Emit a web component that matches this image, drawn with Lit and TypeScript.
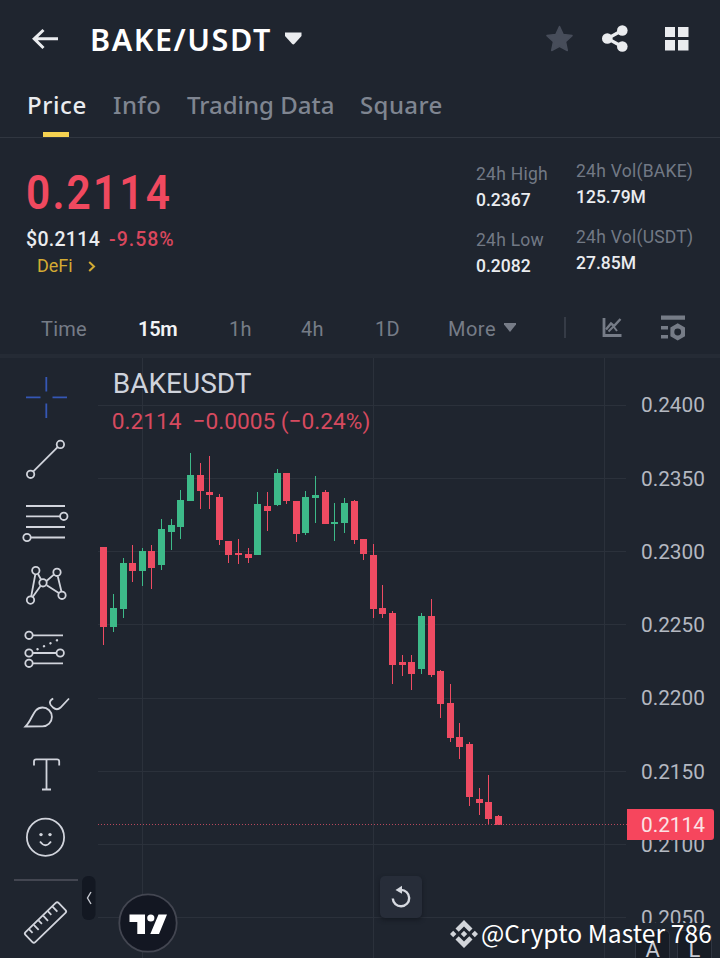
import { LitElement, html, svg, css } from "lit";
import { customElement } from "lit/decorators.js";

type Candle = [kind: "up" | "down", x: number, high: number, top: number, bottom: number, low: number];

const CANDLES: Candle[] = [
  ["down", 103.5, 547, 547, 627, 645],
  ["up", 113.5, 594, 608, 627, 632],
  ["up", 123.5, 558, 563, 609, 618],
  ["down", 132.5, 545, 563, 571, 582],
  ["up", 142.5, 548, 551, 571, 586],
  ["down", 151.5, 545, 551, 568, 589],
  ["up", 161.5, 519, 529, 565, 570],
  ["up", 171.5, 519, 525, 532, 550],
  ["up", 180.5, 490, 500, 527, 539],
  ["up", 190.5, 453, 475, 501, 501],
  ["down", 200.5, 463, 475, 491, 509],
  ["down", 209.5, 456, 492, 495, 509],
  ["down", 219.5, 494, 497, 540, 545],
  ["down", 228.5, 541, 541, 555, 563],
  ["down", 238.5, 539, 553, 555, 564],
  ["down", 248.5, 548, 554, 558, 563],
  ["up", 257.5, 492, 504, 555, 555],
  ["down", 267.5, 492, 506, 511, 531],
  ["up", 277.5, 469, 473, 505, 506],
  ["down", 286.5, 473, 473, 501, 504],
  ["down", 296.5, 501, 501, 534, 542],
  ["up", 305.5, 491, 497, 533, 535],
  ["up", 315.5, 476, 495, 498, 523],
  ["down", 325.5, 490, 492, 524, 524],
  ["up", 334.5, 503, 522, 524, 541],
  ["up", 344.5, 498, 503, 523, 533],
  ["down", 354.5, 500, 501, 540, 544],
  ["down", 363.5, 539, 539, 554, 560],
  ["down", 373.5, 544, 555, 609, 618],
  ["down", 382.5, 585, 608, 614, 618],
  ["down", 392.5, 611, 613, 665, 684],
  ["down", 402.5, 655, 662, 665, 676],
  ["down", 411.5, 655, 662, 674, 690],
  ["up", 421.5, 613, 616, 669, 674],
  ["down", 431.5, 599, 616, 675, 677],
  ["down", 440.5, 670, 671, 704, 718],
  ["down", 450.5, 684, 703, 738, 742],
  ["down", 459.5, 723, 737, 747, 759],
  ["down", 469.5, 742, 744, 797, 806],
  ["down", 479.5, 788, 799, 803, 815],
  ["down", 488.5, 775, 802, 819, 824],
  ["down", 498.5, 815, 816, 825, 825],
];

const LEVELS: [number, string][] = [
  [405, "0.2400"], [478.5, "0.2350"], [551.5, "0.2300"], [624.5, "0.2250"],
  [698, "0.2200"], [771.5, "0.2150"], [844.5, "0.2100"], [917.5, "0.2050"],
];

const ring = (x: number, y: number) => svg`<circle cx=${x} cy=${y} r="3.7" />`;

const TOOLS = [
  svg`<path class="blue" d="M46.3 377V391.5M46.3 403.5V418M26 397.3H40.5M52.5 397.3H67" />`,
  svg`<path d="M33.4 471.3L57.6 447.2" />${ring(30.6, 474.3)}${ring(60.4, 444.4)}`,
  svg`<path d="M26 506H65M26 516.3H60M26 527H65M31 537.5H65" />${ring(63.8, 516.3)}${ring(27, 537.5)}`,
  svg`<path d="M31.2 596.3L35.3 574.5M38 574L41 579.5M32.8 596.7L40.5 586M46.5 581L53.8 574.6M46.7 585.2L58.8 593M57.8 576.5L61.4 591.3" />
    ${ring(35.8, 570.6)}${ring(57, 572.3)}${ring(43, 582.8)}${ring(30.5, 600.1)}${ring(62, 595.3)}`,
  svg`<path d="M33 635.3H63M33 653H56.3M33 663.3H63" /><path class="dots" d="M37.5 649.2L60.5 638.7" />
    ${ring(29, 635.3)}${ring(29, 653)}${ring(60.2, 653)}${ring(29, 663.3)}`,
  svg`<path d="M25.5 726.5C33 719 33 707.5 42.5 707.5A9.4 9.4 0 0 1 42.5 726.3Z" />
    <path d="M53.2 698.5C48.5 701 49 704.5 53 707.5C56 710 58 710 60.5 707.5L69 698.5" />`,
  svg`<path d="M34 765.5V761.5Q34 759.3 36.2 759.3H57Q59.2 759.3 59.2 761.5V765.5M46.5 759.3V789.5M42 789.5H51" />`,
  svg`<circle cx="45.5" cy="837.3" r="18.6" /><path d="M40 841.5Q45.5 849 51 841.5" />
    <circle class="solid" cx="41" cy="834.6" r="1.7" /><circle class="solid" cx="50" cy="834.6" r="1.7" />`,
];

@customElement("app-root")
export class AppRoot extends LitElement {
  static styles = css`
    :host { display: block; position: relative; width: 720px; height: 958px; overflow: hidden; background: #1f252f; color: #eaecef; font-family: Roboto, "Liberation Sans", sans-serif; }
    * { box-sizing: border-box; }
    svg { display: block; flex: none; }
    span { white-space: nowrap; }
    .header { display: flex; align-items: center; height: 78px; padding-left: 31px; }
    .title { font: 600 30.5px/40px "Noto Sans", sans-serif; letter-spacing: 1.55px; color: #fff; margin-left: 31px; width: 195px; }
    .star { margin-left: 243px; }
    .share { margin-left: 28px; }
    .apps { margin-left: 36px; }
    .tabs { display: grid; grid-template-columns: 86px 74px 173px auto; height: 60px; padding: 9px 0 0 27px; border-bottom: 1px solid #303640; font: 500 24px/35px "Noto Sans", sans-serif; color: #7f8591; }
    .tab { display: flex; flex-direction: column; justify-content: space-between; align-items: center; justify-self: start; }
    .spaced { letter-spacing: 0.4px; }
    .active { color: #eaecef; letter-spacing: 0.6px; }
    .active::after { content: ""; width: 26px; height: 5px; margin-right: 2px; background: #f5d251; }
    .ticker { display: flex; height: 167px; padding-left: 26px; }
    .quote { width: 450px; padding-top: 29px; }
    .price { display: block; width: max-content; font-weight: 600; font-size: 49px; line-height: 52px; letter-spacing: 2.5px; color: #f0495f; transform: scaleX(0.865); transform-origin: left; }
    .row { display: flex; margin-top: 8px; font-size: 19.5px; line-height: 26px; font-weight: 500; letter-spacing: 0.3px; }
    .change { color: #d9475d; margin-left: 9px; letter-spacing: 1px; }
    .tag { display: flex; align-items: center; gap: 15px; padding-left: 11px; color: #d3ab33; font-size: 18px; line-height: 26px; }
    .col { width: 100px; padding-top: 23px; }
    .col.raised { padding-top: 20px; }
    .stat { display: flex; flex-direction: column; margin-bottom: 14px; font-size: 17.5px; line-height: 26px; letter-spacing: 0.25px; color: #727985; }
    .value { color: #eaecef; font-weight: 500; letter-spacing: 0; }
    .stat span { align-self: flex-start; }
    .intervals { display: grid; grid-template-columns: 97px 91px 72px 74px 73px 116px 38px 58px auto; align-items: center; height: 49px; padding: 0 0 4px 41px; font-size: 20px; line-height: 41px; color: #767c87; }
    .intervals span { justify-self: start; padding-top: 4px; letter-spacing: 0.2px; }
    .intervals .on { color: #f2f4f6; font-weight: 600; letter-spacing: -0.3px; }
    .intervals .more { display: flex; align-items: center; gap: 8px; }
    .more span { letter-spacing: 0.5px; }
    .rule { width: 2px; height: 21px; background: #353b46; }
    .divider { height: 4px; background: #252b35; }
    .chart { position: relative; display: flex; height: 600px; }
    .tools { width: 97px; padding: 8px 0 0 14px; }
    .tools svg { fill: none; stroke: #d1d4dc; stroke-width: 1.8; }
    .tools .blue { stroke: #3557b5; }
    .tools .dots { stroke-dasharray: 0.1 7; stroke-linecap: round; stroke-width: 2.4; }
    .tools .solid { fill: #d1d4dc; stroke: none; }
    .break { width: 64px; height: 2px; background: #434651; margin-top: 9px; }
    .grid { stroke: #2b313b; stroke-width: 1; }
    .up { fill: #3dba89; stroke: #3dba89; }
    .down { fill: #ee4b62; stroke: #ee4b62; }
    .body { stroke: none; }
    .last { stroke: #b8485c; stroke-dasharray: 1 2; }
    .axis { fill: #b4b8c1; font-size: 20.8px; }
    .axis.current { fill: #fbe3e6; }
    .symbol { fill: #cfd3dc; font-size: 28px; }
    .delta { fill: #d64a5f; font-size: 22.7px; }
    .handle { position: absolute; left: 82px; top: 518px; }
    .logo { position: absolute; left: 118px; top: 535px; }
    .reset { position: absolute; left: 380px; top: 518px; display: grid; place-items: center; width: 42px; height: 42px; border-radius: 5px; background: #272d39; box-shadow: 0 2px 4px #151a22; }
    .mark { position: absolute; left: 450px; top: 558px; display: flex; align-items: center; gap: 3px; height: 36px; color: #fff; font: 400 24.6px/36px "Noto Sans CJK SC", sans-serif; letter-spacing: 0.08px; }
    .mark span { margin-top: -4px; }
  `;

  private stat(label: string, value: string) {
    return html`<div class="stat"><span>${label}</span><span class="value">${value}</span></div>`;
  }

  render() {
    return html`
      <div class="header">
        <svg width="28" height="22" viewBox="31 27.5 28 22" fill="none" stroke="#eaecef" stroke-width="3"><path d="M58 38.3H34M43.5 29.5L34.2 38.3L43.5 47.5" /></svg>
        <span class="title">BAKE/USDT</span>
        <svg width="18" height="14" viewBox="285 32 18 14" fill="#eaecef"><path d="M285 32.5H301.5V36L294.5 43.8Q293.3 45 292 43.8L285 36Z" /></svg>
        <svg class="star" width="28" height="28" viewBox="546 26 28 28"><path d="M559.5 27.5L563.2 35.6L572 36.6L565.5 42.6L567.3 51.5L559.5 47.3L551.7 51.5L553.5 42.6L547 36.6L555.8 35.6Z" fill="#474d5a" stroke="#474d5a" stroke-width="1.5" stroke-linejoin="round" /></svg>
        <svg class="share" width="27" height="28" viewBox="602 25 27 28" fill="#eaecef"><path d="M622 30.5L607.5 38.5L622 46.5" fill="none" stroke="#eaecef" stroke-width="3.2" /><circle cx="622.3" cy="30.5" r="5.3" /><circle cx="607.3" cy="38.5" r="5.3" /><circle cx="622.3" cy="46.5" r="5.3" /></svg>
        <svg class="apps" width="24" height="24" viewBox="0.5 0.5 24 24" fill="#eaecef"><path d="M0.5 0.5H10.5V10.5H0.5ZM13.5 0.5H24V10.5H13.5ZM0.5 13.5H10.5V24H0.5ZM13.5 13.5H24V24H13.5Z" /></svg>
      </div>
      <div class="tabs">
        <div class="tab active"><span>Price</span></div><div class="tab spaced"><span>Info</span></div>
        <div class="tab"><span>Trading Data</span></div><div class="tab spaced"><span>Square</span></div>
      </div>
      <div class="ticker">
        <div class="quote">
          <span class="price">0.2114</span>
          <div class="row"><span>$0.2114</span><span class="change">-9.58%</span></div>
          <div class="tag"><span>DeFi</span><svg width="8" height="11" viewBox="0 0 8 11" fill="none" stroke="#d3ab33" stroke-width="2"><path d="M1.2 1L6 5.5L1.2 10" /></svg></div>
        </div>
        <div class="col">${this.stat("24h High", "0.2367")}${this.stat("24h Low", "0.2082")}</div>
        <div class="col raised">${this.stat("24h Vol(BAKE)", "125.79M")}${this.stat("24h Vol(USDT)", "27.85M")}</div>
      </div>
      <div class="intervals">
        <span>Time</span><span class="on">15m</span><span>1h</span><span>4h</span><span>1D</span>
        <div class="more"><span>More</span><svg width="12" height="10" viewBox="0 0 12 10" fill="#767c87"><path d="M0 0H12V1.5L6 9L0 1.5Z" /></svg></div>
        <div class="rule"></div>
        <svg width="20" height="22" viewBox="602 317 20 22" fill="none" stroke="#767c87" stroke-width="2.8"><path d="M604 318V335.5H621.5" /><path stroke-width="2.4" d="M606 329.5L611 323.5L614 326L620.5 319" /><path stroke-width="2" d="M608.5 331.5L613.5 326.5L617 331" /></svg>
        <svg width="26" height="26" viewBox="660 315 26 26" fill="#767c87"><path d="M661 315.5H685V319.7H661ZM661 326H668V329.5H661ZM661 335H668V338.5H661Z" /><path fill-rule="evenodd" d="M677.7 323.3L685 327.6V336.2L677.7 340.6L670.4 336.2V327.6ZM677.7 328.6A3.4 3.4 0 1 0 677.7 335.4A3.4 3.4 0 1 0 677.7 328.6Z" /></svg>
      </div>
      <div class="divider"></div>
      <div class="chart">
        <div class="tools">
          ${TOOLS.map((t, i) => html`<svg width="64" height="63" viewBox="14 ${366 + 63 * i} 64 63">${t}</svg>`)}
          <div class="break"></div>
          <svg width="64" height="77" viewBox="14 881 64 77"><g transform="rotate(-44 45.5 922.5)"><rect x="22.5" y="915.5" width="46" height="14" rx="2" /><path d="M29 916V921M35.5 916V923M42 916V921M48.5 916V923M55 916V921M61.5 916V923" /></g></svg>
        </div>
        <svg width="623" height="600" viewBox="97 358 623 600">
          <path class="grid" d="M142.5 358V958M373.5 358V958M604.5 358V958" />
          ${LEVELS.map(([y]) => svg`<path class="grid" d="M98 ${Math.floor(y) + 0.5}H626" />`)}
          <text class="symbol" x="112.8" y="393">BAKEUSDT</text>
          <text class="delta" x="111.7" y="429">0.2114</text>
          <text class="delta" x="192.5" y="429">−0.0005 (−0.24%)</text>
          ${CANDLES.map(([k, x, h, t, b, l]) => svg`<g class=${k}><path d="M${x} ${h}V${l}" /><rect class="body" x=${x - 3.5} y=${t} width="7" height=${b - t} /></g>`)}
          <path class="last" d="M98 824.5H627" />
          ${LEVELS.map(([y, s]) => svg`<text class="axis" x="641" y=${y + 7.2}>${s}</text>`)}
          <path d="M627 809H711Q714 809 714 812V837Q714 840 711 840H627Z" fill="#f6465d" />
          <text class="axis current" x="641" y="832">0.2114</text>
          <path d="M627 923H720V958H627Z" fill="#1f252f" />
          <g fill="#171c25" stroke="#2f3541"><rect x="635.5" y="930.5" width="34" height="40" rx="4" /><rect x="677.5" y="930.5" width="34" height="40" rx="4" /></g>
          <g fill="#c9ccd4" font-size="22"><text x="645.5" y="956.7">A</text><text x="688.5" y="956.7">L</text></g>
        </svg>
        <svg class="handle" width="14" height="44" viewBox="82 876 14 44"><rect x="82" y="876" width="13.5" height="44" rx="6" fill="#131822" /><path d="M91 892L87.5 898L91 904" fill="none" stroke="#c5c8d0" stroke-width="1.4" /></svg>
        <svg class="logo" width="60" height="60" viewBox="118 893 60 60"><circle cx="148" cy="923" r="28.7" fill="#131722" stroke="#434651" stroke-width="1.8" /><path d="M129.5 914.5H145V934H137.3V922H129.5ZM158.5 914.5H167L159 934H150.3Z" fill="#fff" /><circle cx="150.8" cy="918" r="3.6" fill="#fff" /></svg>
        <div class="reset"><svg width="22" height="24" viewBox="390 885 22 24"><path d="M392.8 898.5A8.2 8.2 0 1 0 401 889.9" fill="none" stroke="#d6d9e0" stroke-width="2.4" /><path d="M402 885.8V893.8L395.5 889.9Z" fill="#d6d9e0" /></svg></div>
        <div class="mark">
          <svg width="28" height="28" viewBox="-14 -14 28 28" fill="#d2d5da"><path d="M0 -14L8.5 -5.5L5.3 -2.3L0 -7.6L-5.3 -2.3L-8.5 -5.5ZM0 14L8.5 5.5L5.3 2.3L0 7.6L-5.3 2.3L-8.5 5.5ZM-10.8 -3.2L-7.6 0L-10.8 3.2L-14 0ZM10.8 -3.2L14 0L10.8 3.2L7.6 0ZM0 -3.2L3.2 0L0 3.2L-3.2 0Z" /></svg>
          <span>@Crypto Master 786</span>
        </div>
      </div>
    `;
  }
}
